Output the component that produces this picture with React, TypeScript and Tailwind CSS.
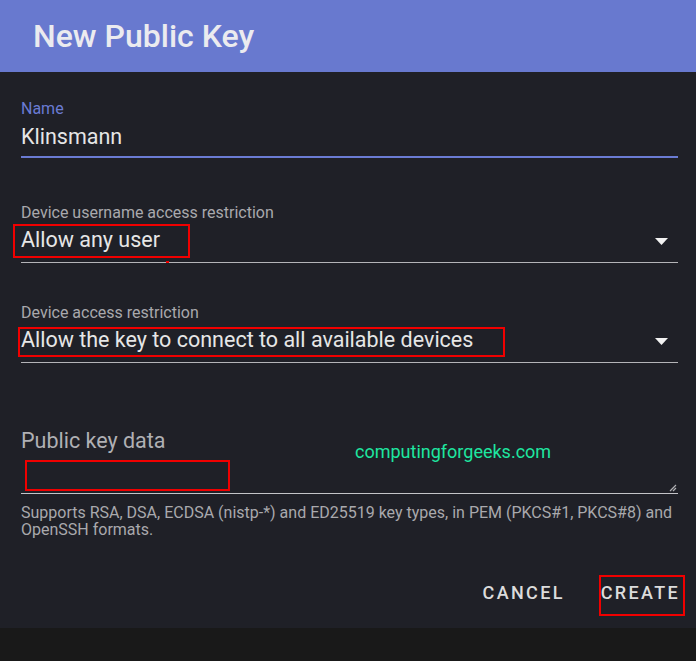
import React from "react";

function Caret() {
  return (
    <svg width="13" height="7" viewBox="0 0 13 7" className="mt-[2px]">
      <path d="M0 0 H13 L6.5 7 Z" fill="#f2f2f2" />
    </svg>
  );
}

function SelectField({
  label,
  value,
  box,
  mt,
}: {
  label: string;
  value: string;
  box: React.ReactNode;
  mt: string;
}) {
  return (
    <div className={mt}>
      <div className="text-[16px] leading-[18px] text-[#a9a9ad]">{label}</div>
      <div className="mt-[5px] flex items-center justify-between pb-[9px]">
        <span className="relative text-[21.5px] leading-[26px] text-[#e6e6e6]">
          {value}
          {box}
        </span>
        <span className="mr-[10px]">
          <Caret />
        </span>
      </div>
      <div className="h-px bg-[#b4b4b8]" />
    </div>
  );
}

export default function App() {
  return (
    <div
      className="h-[661px] w-full bg-[#191919]"
      style={{ fontFamily: "Roboto, 'Liberation Sans', sans-serif" }}
    >
      <div className="flex h-[628px] flex-col bg-[#1f2027]">
        <div className="flex h-[72px] items-center bg-[#6879cf] px-[33px]">
          <h1 className="text-[32px] font-medium leading-[38px] text-[#ebebef]">
            New Public Key
          </h1>
        </div>

        <div className="pl-[21px] pr-[18px] pt-[28px]">
          <div>
            <div className="text-[16px] leading-[18px] text-[#6a7bd3]">Name</div>
            <div className="mt-[6px] pb-[6px] text-[21.5px] leading-[26px] text-[#e6e6e6]">
              Klinsmann
            </div>
            <div className="h-[2px] bg-[#6a7bd3]" />
          </div>

          <div className="relative">
            <SelectField
              mt="mt-[46px]"
              label="Device username access restriction"
              value="Allow any user"
              box={
                <span className="absolute left-[-8px] top-[-3px] h-[34px] w-[177px] border-2 border-[#f00000]" />
              }
            />
            <span className="absolute bottom-0 left-[145px] h-[2px] w-[3px] bg-[#f00000]" />
          </div>

          <SelectField
            mt="mt-[41px]"
            label="Device access restriction"
            value="Allow the key to connect to all available devices"
            box={
              <span className="absolute left-[-3px] top-[0px] h-[30px] w-[487px] border-2 border-[#f00000]" />
            }
          />

          <div className="relative mt-[65px] h-[65px]">
            <div className="text-[21.5px] leading-[25px] text-[#b0b0b4]">Public key data</div>
            <span className="absolute left-[4px] top-[32px] h-[31px] w-[205px] border-2 border-[#f00000]" />
            <span className="absolute left-[334px] top-[13px] text-[18px] leading-[22px] text-[#1ee6a0]">
              computingforgeeks.com
            </span>
            <svg
              width="8"
              height="8"
              viewBox="0 0 8 8"
              className="absolute bottom-[1px] right-[1px]"
            >
              <path d="M7 1 L1 7 M7 4 L4 7" stroke="#b0b0b4" strokeWidth="1.2" />
            </svg>
          </div>
          <div className="h-px bg-[#c4c4c8]" />

          <p className="mr-[-8px] mt-[10px] text-[16px] leading-[17px] text-[#a9a9ad]">
            Supports RSA, DSA, ECDSA (nistp-*) and ED25519 key types, in PEM (PKCS#1, PKCS#8) and
            OpenSSH formats.
          </p>

          <div className="mt-[44px] flex justify-end gap-[36px]">
            <button className="text-[18px] font-medium uppercase leading-[22px] tracking-[0.13em] text-[#dcdcdc]">
              Cancel
            </button>
            <button className="relative mr-[-2px] text-[18px] font-medium uppercase leading-[22px] tracking-[0.13em] text-[#dcdcdc]">
              Create
              <span className="absolute left-[-2px] top-[-7px] h-[41px] w-[86px] border-2 border-[#f00000]" />
            </button>
          </div>
        </div>
      </div>
    </div>
  );
}
